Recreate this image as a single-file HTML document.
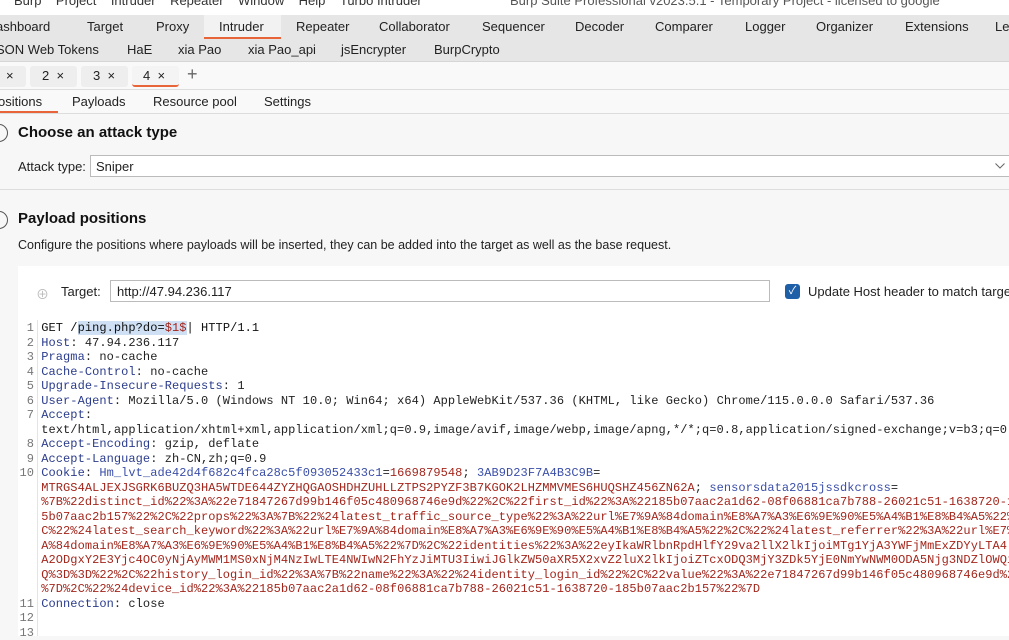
<!DOCTYPE html>
<html><head><meta charset="utf-8"><style>
*{margin:0;padding:0;box-sizing:border-box}
body{width:1009px;height:636px;overflow:hidden;background:#f7f7f7;font-family:"Liberation Sans","Noto Sans CJK SC",sans-serif;color:#222;position:relative}
.abs{position:absolute;white-space:nowrap}
.menu{top:0;left:0;width:1009px;height:15px;background:#fff;font-size:13px;color:#333}
.nav{top:15px;left:0;width:1009px;height:47px;background:#e6e6e6;border-bottom:1px solid #d6d6d6}
.t{position:absolute;font-size:13px;color:#222}
.tabs{top:62px;left:0;width:1009px;height:28px;background:#f9f9f9;border-bottom:1px solid #ddd}
.sub{top:90px;left:0;width:1009px;height:24px;background:#f9f9f9;border-bottom:1px solid #ddd}
.code{font-family:"Liberation Mono",monospace;font-size:12px;line-height:14.5px;white-space:pre;letter-spacing:0.06px}
.k{color:#2b3c8c}.v{color:#111}.cn{color:#3a4ea8}.cv{color:#a3261c}
.ln{color:#777;text-align:right;width:16px;display:inline-block}
</style></head><body>
<div class="abs menu"><span style="position:absolute;left:14px;top:-7px">Burp&nbsp;&nbsp;&nbsp;&nbsp;Project&nbsp;&nbsp;&nbsp;&nbsp;Intruder&nbsp;&nbsp;&nbsp;&nbsp;Repeater&nbsp;&nbsp;&nbsp;&nbsp;Window&nbsp;&nbsp;&nbsp;&nbsp;Help&nbsp;&nbsp;&nbsp;&nbsp;Turbo Intruder</span><span style="position:absolute;left:510px;top:-7px;color:#555">Burp Suite Professional v2023.5.1 - Temporary Project - licensed to google</span></div>
<div class="abs nav">
<span class="t" style="left:-4px;top:4px">ashboard</span>
<span class="t" style="left:87px;top:4px">Target</span>
<span class="t" style="left:156px;top:4px">Proxy</span>
<div style="position:absolute;left:204px;top:0;width:77px;height:24px;background:#f2f2f2;border-bottom:2px solid #e8653a"></div>
<span class="t" style="left:219px;top:4px">Intruder</span>
<span class="t" style="left:296px;top:4px">Repeater</span>
<span class="t" style="left:379px;top:4px">Collaborator</span>
<span class="t" style="left:482px;top:4px">Sequencer</span>
<span class="t" style="left:575px;top:4px">Decoder</span>
<span class="t" style="left:655px;top:4px">Comparer</span>
<span class="t" style="left:745px;top:4px">Logger</span>
<span class="t" style="left:816px;top:4px">Organizer</span>
<span class="t" style="left:905px;top:4px">Extensions</span>
<span class="t" style="left:995px;top:4px">Le</span>
<span class="t" style="left:-4px;top:27px">SON Web Tokens</span>
<span class="t" style="left:127px;top:27px">HaE</span>
<span class="t" style="left:178px;top:27px">xia Pao</span>
<span class="t" style="left:248px;top:27px">xia Pao_api</span>
<span class="t" style="left:341px;top:27px">jsEncrypter</span>
<span class="t" style="left:434px;top:27px">BurpCrypto</span>
</div>
<div class="abs tabs">
<div style="position:absolute;left:-5px;top:4px;width:31px;height:21px;background:#eee;border-radius:3px"></div><span class="t" style="left:6px;top:6px">×</span>
<div style="position:absolute;left:30px;top:4px;width:47px;height:21px;background:#eee;border-radius:3px"></div><span class="t" style="left:42px;top:6px">2&nbsp;&nbsp;×</span>
<div style="position:absolute;left:81px;top:4px;width:47px;height:21px;background:#eee;border-radius:3px"></div><span class="t" style="left:93px;top:6px">3&nbsp;&nbsp;×</span>
<div style="position:absolute;left:132px;top:4px;width:47px;height:21px;background:#f4f4f4;border-radius:3px;border-bottom:2px solid #e8653a"></div><span class="t" style="left:143px;top:6px">4&nbsp;&nbsp;×</span>
<span class="t" style="left:187px;top:2px;font-size:18px;color:#666">+</span>
</div>
<div class="abs sub">
<span class="t" style="left:-2px;top:4px">ositions</span>
<div style="position:absolute;left:0;top:21px;width:58px;height:2px;background:#e8653a"></div>
<span class="t" style="left:72px;top:4px">Payloads</span>
<span class="t" style="left:153px;top:4px">Resource pool</span>
<span class="t" style="left:264px;top:4px">Settings</span>
</div>
<div class="abs" style="left:-10px;top:124px;width:18px;height:18px;border:1.5px solid #555;border-radius:50%"></div>
<span class="abs" style="left:18px;top:124px;font-size:15px;font-weight:bold;color:#111">Choose an attack type</span>
<span class="abs" style="left:18px;top:159px;font-size:13px">Attack type:</span>
<div class="abs" style="left:90px;top:155px;width:925px;height:22px;background:#fff;border:1px solid #bbb"><span style="position:absolute;left:5px;top:3px;font-size:13px">Sniper</span><svg style="position:absolute;left:904px;top:7px" width="10" height="6" viewBox="0 0 10 6"><path d="M0.5 0.5 L5 5 L9.5 0.5" fill="none" stroke="#666" stroke-width="1"/></svg></div>
<div class="abs" style="left:0;top:189px;width:1009px;height:1px;background:#ddd"></div>
<div class="abs" style="left:-10px;top:211px;width:18px;height:18px;border:1.5px solid #555;border-radius:50%"></div>
<span class="abs" style="left:18px;top:210px;font-size:15px;font-weight:bold;color:#111">Payload positions</span>
<span class="abs" style="left:18px;top:238px;font-size:12.5px">Configure the positions where payloads will be inserted, they can be added into the target as well as the base request.</span>
<div class="abs" style="left:18px;top:266px;width:991px;height:370px;background:#fff"></div>
<span class="abs" style="left:36px;top:284px;font-size:13px;color:#bbb">⊕</span>
<span class="abs" style="left:61px;top:284px;font-size:13px">Target:</span>
<div class="abs" style="left:110px;top:280px;width:660px;height:22px;background:#fff;border:1px solid #bbb"><span style="position:absolute;left:6px;top:3px;font-size:13px">http://47.94.236.117</span></div>
<div class="abs" style="left:785px;top:284px;width:15px;height:15px;background:#1f5fa8;border-radius:3px;color:#fff;font-size:11px;text-align:center;line-height:15px">✓</div>
<span class="abs" style="left:808px;top:284px;font-size:13px">Update Host header to match target</span>
<div class="abs" style="left:37px;top:320px;width:1px;height:316px;background:#e4e4e4"></div>
<div class="abs code" style="left:18px;top:321px"><span class="ln">1</span> <span class="v">GET /<span style="background:#cfe0f5">ping.php?do=<span style="color:#a3261c">$1$</span></span>| HTTP/1.1</span>
<span class="ln">2</span> <span class="k">Host</span>: 47.94.236.117
<span class="ln">3</span> <span class="k">Pragma</span>: no-cache
<span class="ln">4</span> <span class="k">Cache-Control</span>: no-cache
<span class="ln">5</span> <span class="k">Upgrade-Insecure-Requests</span>: 1
<span class="ln">6</span> <span class="k">User-Agent</span>: Mozilla/5.0 (Windows NT 10.0; Win64; x64) AppleWebKit/537.36 (KHTML, like Gecko) Chrome/115.0.0.0 Safari/537.36
<span class="ln">7</span> <span class="k">Accept</span>:
<span class="ln"></span> text/html,application/xhtml+xml,application/xml;q=0.9,image/avif,image/webp,image/apng,*/*;q=0.8,application/signed-exchange;v=b3;q=0.7
<span class="ln">8</span> <span class="k">Accept-Encoding</span>: gzip, deflate
<span class="ln">9</span> <span class="k">Accept-Language</span>: zh-CN,zh;q=0.9
<span class="ln">10</span> <span class="k">Cookie</span>: <span class="cn">Hm_lvt_ade42d4f682c4fca28c5f093052433c1</span>=<span class="cv">1669879548</span>; <span class="cn">3AB9D23F7A4B3C9B</span>=
<span class="ln"></span> <span class="cv">MTRGS4ALJEXJSGRK6BUZQ3HA5WTDE644ZYZHQGAOSHDHZUHLLZTPS2PYZF3B7KGOK2LHZMMVMES6HUQSHZ456ZN62A</span>; <span class="cn">sensorsdata2015jssdkcross</span>=
<span class="ln"></span> <span class="cv">%7B%22distinct_id%22%3A%22e71847267d99b146f05c480968746e9d%22%2C%22first_id%22%3A%22185b07aac2a1d62-08f06881ca7b788-26021c51-1638720-1</span>
<span class="ln"></span> <span class="cv">5b07aac2b157%22%2C%22props%22%3A%7B%22%24latest_traffic_source_type%22%3A%22url%E7%9A%84domain%E8%A7%A3%E6%9E%90%E5%A4%B1%E8%B4%A5%22%</span>
<span class="ln"></span> <span class="cv">C%22%24latest_search_keyword%22%3A%22url%E7%9A%84domain%E8%A7%A3%E6%9E%90%E5%A4%B1%E8%B4%A5%22%2C%22%24latest_referrer%22%3A%22url%E7%</span>
<span class="ln"></span> <span class="cv">A%84domain%E8%A7%A3%E6%9E%90%E5%A4%B1%E8%B4%A5%22%7D%2C%22identities%22%3A%22eyIkaWRlbnRpdHlfY29va2llX2lkIjoiMTg1YjA3YWFjMmExZDYyLTA4</span>
<span class="ln"></span> <span class="cv">A2ODgxY2E3Yjc4OC0yNjAyMWM1MS0xNjM4NzIwLTE4NWIwN2FhYzJiMTU3IiwiJGlkZW50aXR5X2xvZ2luX2lkIjoiZTcxODQ3MjY3ZDk5YjE0NmYwNWM0ODA5Njg3NDZlOWQi</span>
<span class="ln"></span> <span class="cv">Q%3D%3D%22%2C%22history_login_id%22%3A%7B%22name%22%3A%22%24identity_login_id%22%2C%22value%22%3A%22e71847267d99b146f05c480968746e9d%2</span>
<span class="ln"></span> <span class="cv">%7D%2C%22%24device_id%22%3A%22185b07aac2a1d62-08f06881ca7b788-26021c51-1638720-185b07aac2b157%22%7D</span>
<span class="ln">11</span> <span class="k">Connection</span>: close
<span class="ln">12</span>
<span class="ln">13</span></div>
</body></html>
